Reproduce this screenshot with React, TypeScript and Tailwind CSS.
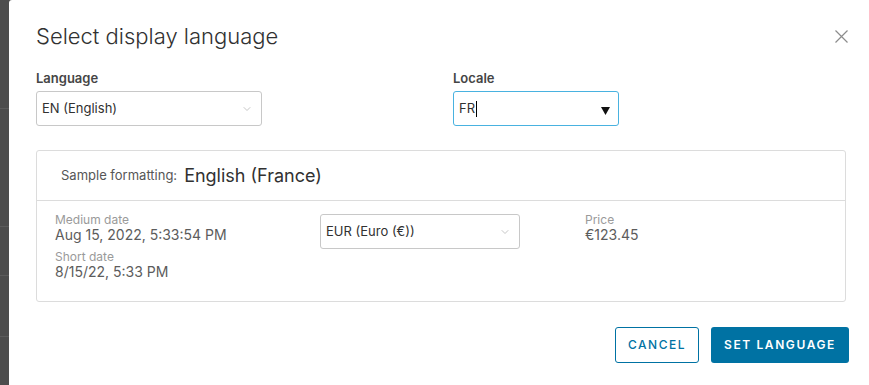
import { ChevronDown } from 'lucide-react';

export default function App() {
  return (
    <div
      className="flex h-[385px] w-[869px] overflow-hidden bg-[#4d4d4d]"
      style={{ fontFamily: 'Inter, Lato, sans-serif' }}
    >
      {/* Backdrop strip */}
      <div className="relative w-[9px] shrink-0">
        <div className="absolute top-[108px] left-0 h-px w-full bg-[#5c5c5c]" />
        <div className="absolute top-[226px] left-0 h-px w-full bg-[#5c5c5c]" />
        <div className="absolute top-[275px] left-0 h-px w-full bg-[#5c5c5c]" />
        <div className="absolute top-[336px] left-0 h-px w-full bg-[#5c5c5c]" />
      </div>

      {/* Modal */}
      <div className="flex-1 rounded-tl-[3px] bg-white pl-[27px] pr-[20px] pt-[22px]">
        <div className="flex items-start justify-between">
          <h1 className="text-[22px] font-light leading-[28px] text-[#313131]">Select display language</h1>
          <button className="mr-[1px] mt-[8px] text-[#8c8c8c]">
            <svg width="13" height="13" viewBox="0 0 13 13" fill="none" stroke="currentColor" strokeWidth="1.2">
              <path d="M0.5 0.5 L12.5 12.5 M12.5 0.5 L0.5 12.5" />
            </svg>
          </button>
        </div>

        <div className="mt-[20px] flex">
          <div className="w-[417px]">
            <label className="block text-[13px] font-semibold leading-[16px] text-[#454545]">Language</label>
            <div className="mt-[5px] flex h-[35px] w-[226px] items-center justify-between rounded-[3px] border border-[#c8c8c8] px-[5px]">
              <span className="text-[13px] text-[#313131]">EN (English)</span>
              <ChevronDown className="mr-[3px] h-[12px] w-[12px] text-[#b3b3b3]" strokeWidth={1.5} />
            </div>
          </div>
          <div>
            <label className="block text-[13px] font-semibold leading-[16px] text-[#454545]">Locale</label>
            <div className="mt-[5px] flex h-[35px] w-[166px] items-center justify-between rounded-[3px] border border-[#49b2e0] pl-[5px] pr-[8px]">
              <span className="flex items-center text-[13px] text-[#313131]">
                FR<span className="ml-px inline-block h-[16px] w-px bg-black" />
              </span>
              <svg className="mt-[5px]" width="9" height="8" viewBox="0 0 9 8" fill="#111">
                <path d="M0 0 H9 L4.5 8 Z" />
              </svg>
            </div>
          </div>
        </div>

        <div className="mt-[24px] h-[152px] w-[810px] rounded-[3px] border border-[#dcdcdc]">
          <div className="flex h-[50px] items-center gap-[7px] border-b border-[#dcdcdc] pl-[24px]">
            <span className="text-[13px] text-[#565656]">Sample formatting:</span>
            <span className="text-[18px] text-[#313131]">English (France)</span>
          </div>
          <div className="grid grid-cols-[265px_265px_1fr] pl-[18px] pt-[12px]">
            <div className="leading-[14px]">
              <div className="text-[12px] text-[#9a9a9a]">Medium date</div>
              <div className="text-[14px] leading-[16px] text-[#5c5c5c]">Aug 15, 2022, 5:33:54 PM</div>
              <div className="mt-[7px] text-[12px] text-[#9a9a9a]">Short date</div>
              <div className="text-[14px] leading-[16px] text-[#5c5c5c]">8/15/22, 5:33 PM</div>
            </div>
            <div className="pt-px">
              <div className="flex h-[35px] w-[200px] items-center justify-between rounded-[3px] border border-[#c8c8c8] px-[5px]">
                <span className="text-[13px] text-[#313131]">EUR (Euro (€))</span>
                <ChevronDown className="mr-[3px] h-[12px] w-[12px] text-[#b3b3b3]" strokeWidth={1.5} />
              </div>
            </div>
            <div className="leading-[14px]">
              <div className="text-[12px] text-[#9a9a9a]">Price</div>
              <div className="text-[14px] leading-[16px] text-[#5c5c5c]">€123.45</div>
            </div>
          </div>
        </div>

        <div className="mt-[25px] flex justify-end gap-[12px] pr-0">
          <button className="h-[36px] w-[84px] rounded-[3px] border border-[#0072a3] text-[12px] font-medium tracking-[1.5px] text-[#0072a3]">
            CANCEL
          </button>
          <button className="h-[36px] w-[138px] rounded-[3px] bg-[#0072a3] text-[12px] font-semibold tracking-[1.6px] text-white">
            SET LANGUAGE
          </button>
        </div>
      </div>
    </div>
  );
}
